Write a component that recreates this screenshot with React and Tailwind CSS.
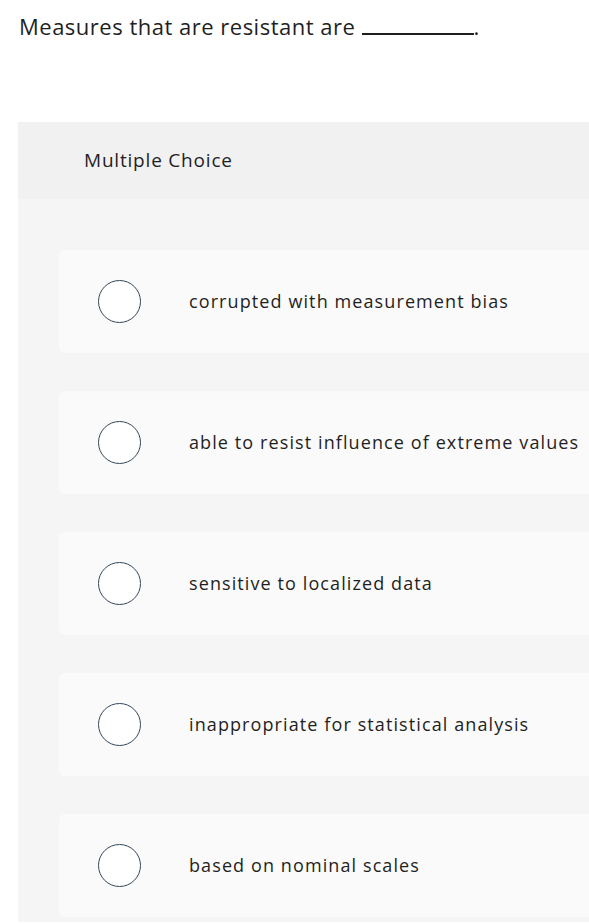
import React from 'react';

const options = [
    'corrupted with measurement bias',
    'able to resist influence of extreme values',
    'sensitive to localized data',
    'inappropriate for statistical analysis',
    'based on nominal scales',
];

const App = () => {
    return (
        <div className="w-[589px] h-[924px] overflow-hidden bg-white text-[#1f1f1f]" style={{ fontFamily: '"Open Sans", sans-serif' }}>
            <p className="pl-[19px] pt-[12px] text-[22px] leading-[28px] tracking-[0.5px]">
                Measures that are resistant are{' '}
                <span className="inline-block w-[112px] border-b-[2px] border-[#1f1f1f] align-baseline"></span>.
            </p>

            <div className="ml-[18px] mt-[82px] w-[600px] bg-[#f5f5f5]">
                <div className="h-[77px] bg-[#f1f1f1] pl-[66px] flex items-center text-[19px] tracking-[0.8px]">
                    Multiple Choice
                </div>
                <div className="pl-[41px] pt-[51px] pb-[5px] flex flex-col gap-[38px]">
                    {options.map((opt) => (
                        <div key={opt} className="h-[103px] bg-[#fafafa] rounded-l-[6px] flex items-center">
                            <span className="ml-[39px] w-[43px] h-[43px] rounded-full border border-[#34475a] bg-white shrink-0"></span>
                            <span className="ml-[48px] text-[18px] tracking-[1.1px] whitespace-nowrap">{opt}</span>
                        </div>
                    ))}
                </div>
            </div>
        </div>
    );
};

export default App;
